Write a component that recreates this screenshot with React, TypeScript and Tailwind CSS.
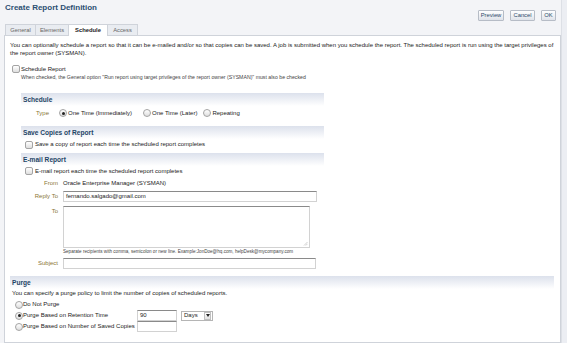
import React from "react";

const font = { fontFamily: '"Liberation Sans", Arial, sans-serif' };

function Checkbox({ className = "" }: { className?: string }) {
  return (
    <span
      className={
        "inline-block w-[8px] h-[8px] rounded-[2px] border border-[#a4a4a4] bg-gradient-to-b from-white to-[#dedede] shrink-0 " +
        className
      }
    />
  );
}

function Radio({ checked = false }: { checked?: boolean }) {
  return (
    <span className="relative inline-flex items-center justify-center w-[8px] h-[8px] rounded-full border border-[#a4a4a4] bg-gradient-to-b from-white to-[#dedede] shrink-0">
      {checked && <span className="w-[3px] h-[3px] rounded-full bg-[#222]" />}
    </span>
  );
}

function SectionHeader({ title, className = "" }: { title: string; className?: string }) {
  return (
    <div
      className={
        "h-[13px] flex items-center pl-[2px] bg-gradient-to-b from-[#dce1ec] to-white text-[6.6px] font-bold text-[#1f4566] " +
        className
      }
    >
      {title}
    </div>
  );
}

function Input({ w, h = 11 }: { w: string; h?: number }) {
  return (
    <div
      className={
        "bg-white border border-[#d2d2d2] border-t-[#8a8a8a] flex items-center pl-[1px] " + w
      }
      style={{ height: h }}
    />
  );
}

export default function App() {
  return (
    <div
      className="w-[567px] h-[343px] overflow-hidden bg-[#f3f4f7] text-[#333] relative"
      style={font}
    >
      <div className="flex h-full">
        <div className="w-[561px] shrink-0 flex flex-col">
          {/* title */}
          <div className="pl-[5px] pt-[2px] h-[11px] text-[8px] font-bold text-[#2b4f72] leading-[11px]">
            Create Report Definition
          </div>
          {/* buttons */}
          <div className="flex justify-end gap-[6px] pr-[5px] h-[11px] mt-[-1px]">
            <Btn label="Preview" w="w-[26px]" />
            <Btn label="Cancel" w="w-[25px]" />
            <Btn label="OK" w="w-[15px]" />
          </div>
          {/* tabs */}
          <div className="flex pl-[5px] mt-[3px] h-[11px] items-end">
            <Tab label="General" w="w-[31px]" />
            <Tab label="Elements" w="w-[34px]" />
            <Tab label="Schedule" w="w-[40px]" active />
            <Tab label="Access" w="w-[31px]" />
          </div>
          {/* panel */}
          <div className="ml-[4px] flex-1 bg-white border border-[#cfd3da] pl-[5px] pr-[6px] pt-[5px]">
            <p className="text-[6px] leading-[8px] text-[#222]">
              You can optionally schedule a report so that it can be e-mailed and/or so that copies can be saved. A job is submitted when you schedule the report. The scheduled report is run using the target privileges of the report owner (SYSMAN).
            </p>
            <div className="flex items-center h-[10px] mt-[7px] pl-[2px] text-[6px] text-[#222]">
              <Checkbox />
              <span className="ml-[1px]">Schedule Report</span>
            </div>
            <div className="pl-[11px] text-[5.2px] leading-[7px] text-[#444] whitespace-nowrap">
              When checked, the General option "Run report using target privileges of the report owner (SYSMAN)" must also be checked
            </div>

            <div className="ml-[11px] w-[303px] mt-[12px]">
              <SectionHeader title="Schedule" />
              <div className="flex items-center h-[14px] text-[6px] text-[#222]">
                <span className="w-[28px] text-right text-[#8a7636]">Type</span>
                <span className="ml-[10px] flex items-center">
                  <Radio checked />
                  <span className="ml-[1px]">One Time (Immediately)</span>
                </span>
                <span className="ml-[11px] flex items-center">
                  <Radio />
                  <span className="ml-[1px]">One Time (Later)</span>
                </span>
                <span className="ml-[6px] flex items-center">
                  <Radio />
                  <span className="ml-[1px]">Repeating</span>
                </span>
              </div>

              <SectionHeader title="Save Copies of Report" className="mt-[6px]" />
              <div className="flex items-center h-[11px] pl-[4px] text-[6px] text-[#222]">
                <Checkbox />
                <span className="ml-[2px]">Save a copy of report each time the scheduled report completes</span>
              </div>

              <SectionHeader title="E-mail Report" className="mt-[3px]" />
              <div className="flex items-center h-[10px] pl-[4px] text-[6px] text-[#222]">
                <Checkbox />
                <span className="ml-[2px]">E-mail report each time the scheduled report completes</span>
              </div>
              <div className="flex items-center h-[14px] text-[6px]">
                <span className="w-[37px] text-right text-[#8a7636]">From</span>
                <span className="ml-[5px] text-[#222]">Oracle Enterprise Manager (SYSMAN)</span>
              </div>
              <div className="flex items-center h-[12px] text-[6px]">
                <span className="w-[37px] text-right text-[#8a7636]">Reply To</span>
                <div className="ml-[5px] w-[254px] h-[11px] bg-white border border-[#d2d2d2] border-t-[#8a8a8a] flex items-center pl-[2px] text-[#222]">
                  fernando.salgado@gmail.com
                </div>
              </div>
              <div className="flex mt-[4px] text-[6px]">
                <span className="w-[37px] text-right text-[#8a7636] leading-[8px] pt-[1px]">To</span>
                <div className="ml-[5px] w-[247px] h-[42px] bg-white border border-[#d2d2d2] border-t-[#8a8a8a] relative">
                  <svg className="absolute right-[1px] bottom-[1px]" width="5" height="5" viewBox="0 0 5 5">
                    <path d="M4.5 1 L1 4.5 M4.5 2.8 L2.8 4.5" stroke="#b0b0b0" strokeWidth="0.6" />
                  </svg>
                </div>
              </div>
              <div className="pl-[42px] text-[4.6px] leading-[7px] text-[#444] whitespace-nowrap">
                Separate recipients with comma, semicolon or new line. Example:JonDoe@hq.com, helpDesk@mycompany.com
              </div>
              <div className="flex items-center h-[12px] mt-[2px] text-[6px]">
                <span className="w-[37px] text-right text-[#8a7636]">Subject</span>
                <div className="ml-[5px]">
                  <Input w="w-[253px]" />
                </div>
              </div>
            </div>

            <SectionHeader title="Purge" className="mt-[7px] w-[544px]" />
            <div className="pl-[2px] text-[6px] leading-[8px] text-[#222]">
              You can specify a purge policy to limit the number of copies of scheduled reports.
            </div>
            <div className="pl-[5px] mt-[2px] text-[6px] text-[#222]">
              <div className="flex items-center h-[11px]">
                <Radio />
                <span className="ml-[0px]">Do Not Purge</span>
              </div>
              <div className="flex items-center h-[11px]">
                <Radio checked />
                <span className="w-[114px] ml-[0px]">Purge Based on Retention Time</span>
                <div className="w-[40px] h-[11px] bg-white border border-[#d2d2d2] border-t-[#8a8a8a] flex items-center pl-[2px]">
                  90
                </div>
                <div className="ml-[4px] w-[32px] h-[10px] bg-white border border-[#b5b5b5] flex items-center">
                  <span className="flex-1 pl-[2px]">Days</span>
                  <span className="w-[7px] h-[8px] mr-[1px] border border-[#c0c0c0] bg-gradient-to-b from-white to-[#e2e2e2] flex items-center justify-center">
                    <svg width="4" height="3" viewBox="0 0 4 3">
                      <path d="M0 0 L4 0 L2 3 Z" fill="#222" />
                    </svg>
                  </span>
                </div>
              </div>
              <div className="flex items-center h-[11px]">
                <Radio />
                <span className="w-[114px] ml-[0px]">Purge Based on Number of Saved Copies</span>
                <div className="w-[40px] h-[11px] bg-white border border-[#d2d2d2] border-t-[#8a8a8a]" />
              </div>
            </div>
          </div>
        </div>
        <div className="flex-1 bg-[#eceef3] border-l border-[#dde0e6]" />
      </div>
    </div>
  );
}

function Btn({ label, w }: { label: string; w: string }) {
  return (
    <div
      className={
        "h-[11px] flex items-center justify-center border border-[#b6bcc6] rounded-[1px] bg-gradient-to-b from-white to-[#dfe3ea] text-[5.8px] text-[#2b4a6a] " +
        w
      }
    >
      {label}
    </div>
  );
}

function Tab({ label, w, active = false }: { label: string; w: string; active?: boolean }) {
  return (
    <div
      className={
        "h-[11px] flex items-center justify-center border border-b-0 border-[#cfd3da] text-[5.8px] -mr-[1px] " +
        (active ? "bg-white font-bold text-[#222] h-[12px] relative top-[1px] z-10" : "bg-[#e9ecf1] text-[#666]") +
        " " +
        w
      }
    >
      {label}
    </div>
  );
}
